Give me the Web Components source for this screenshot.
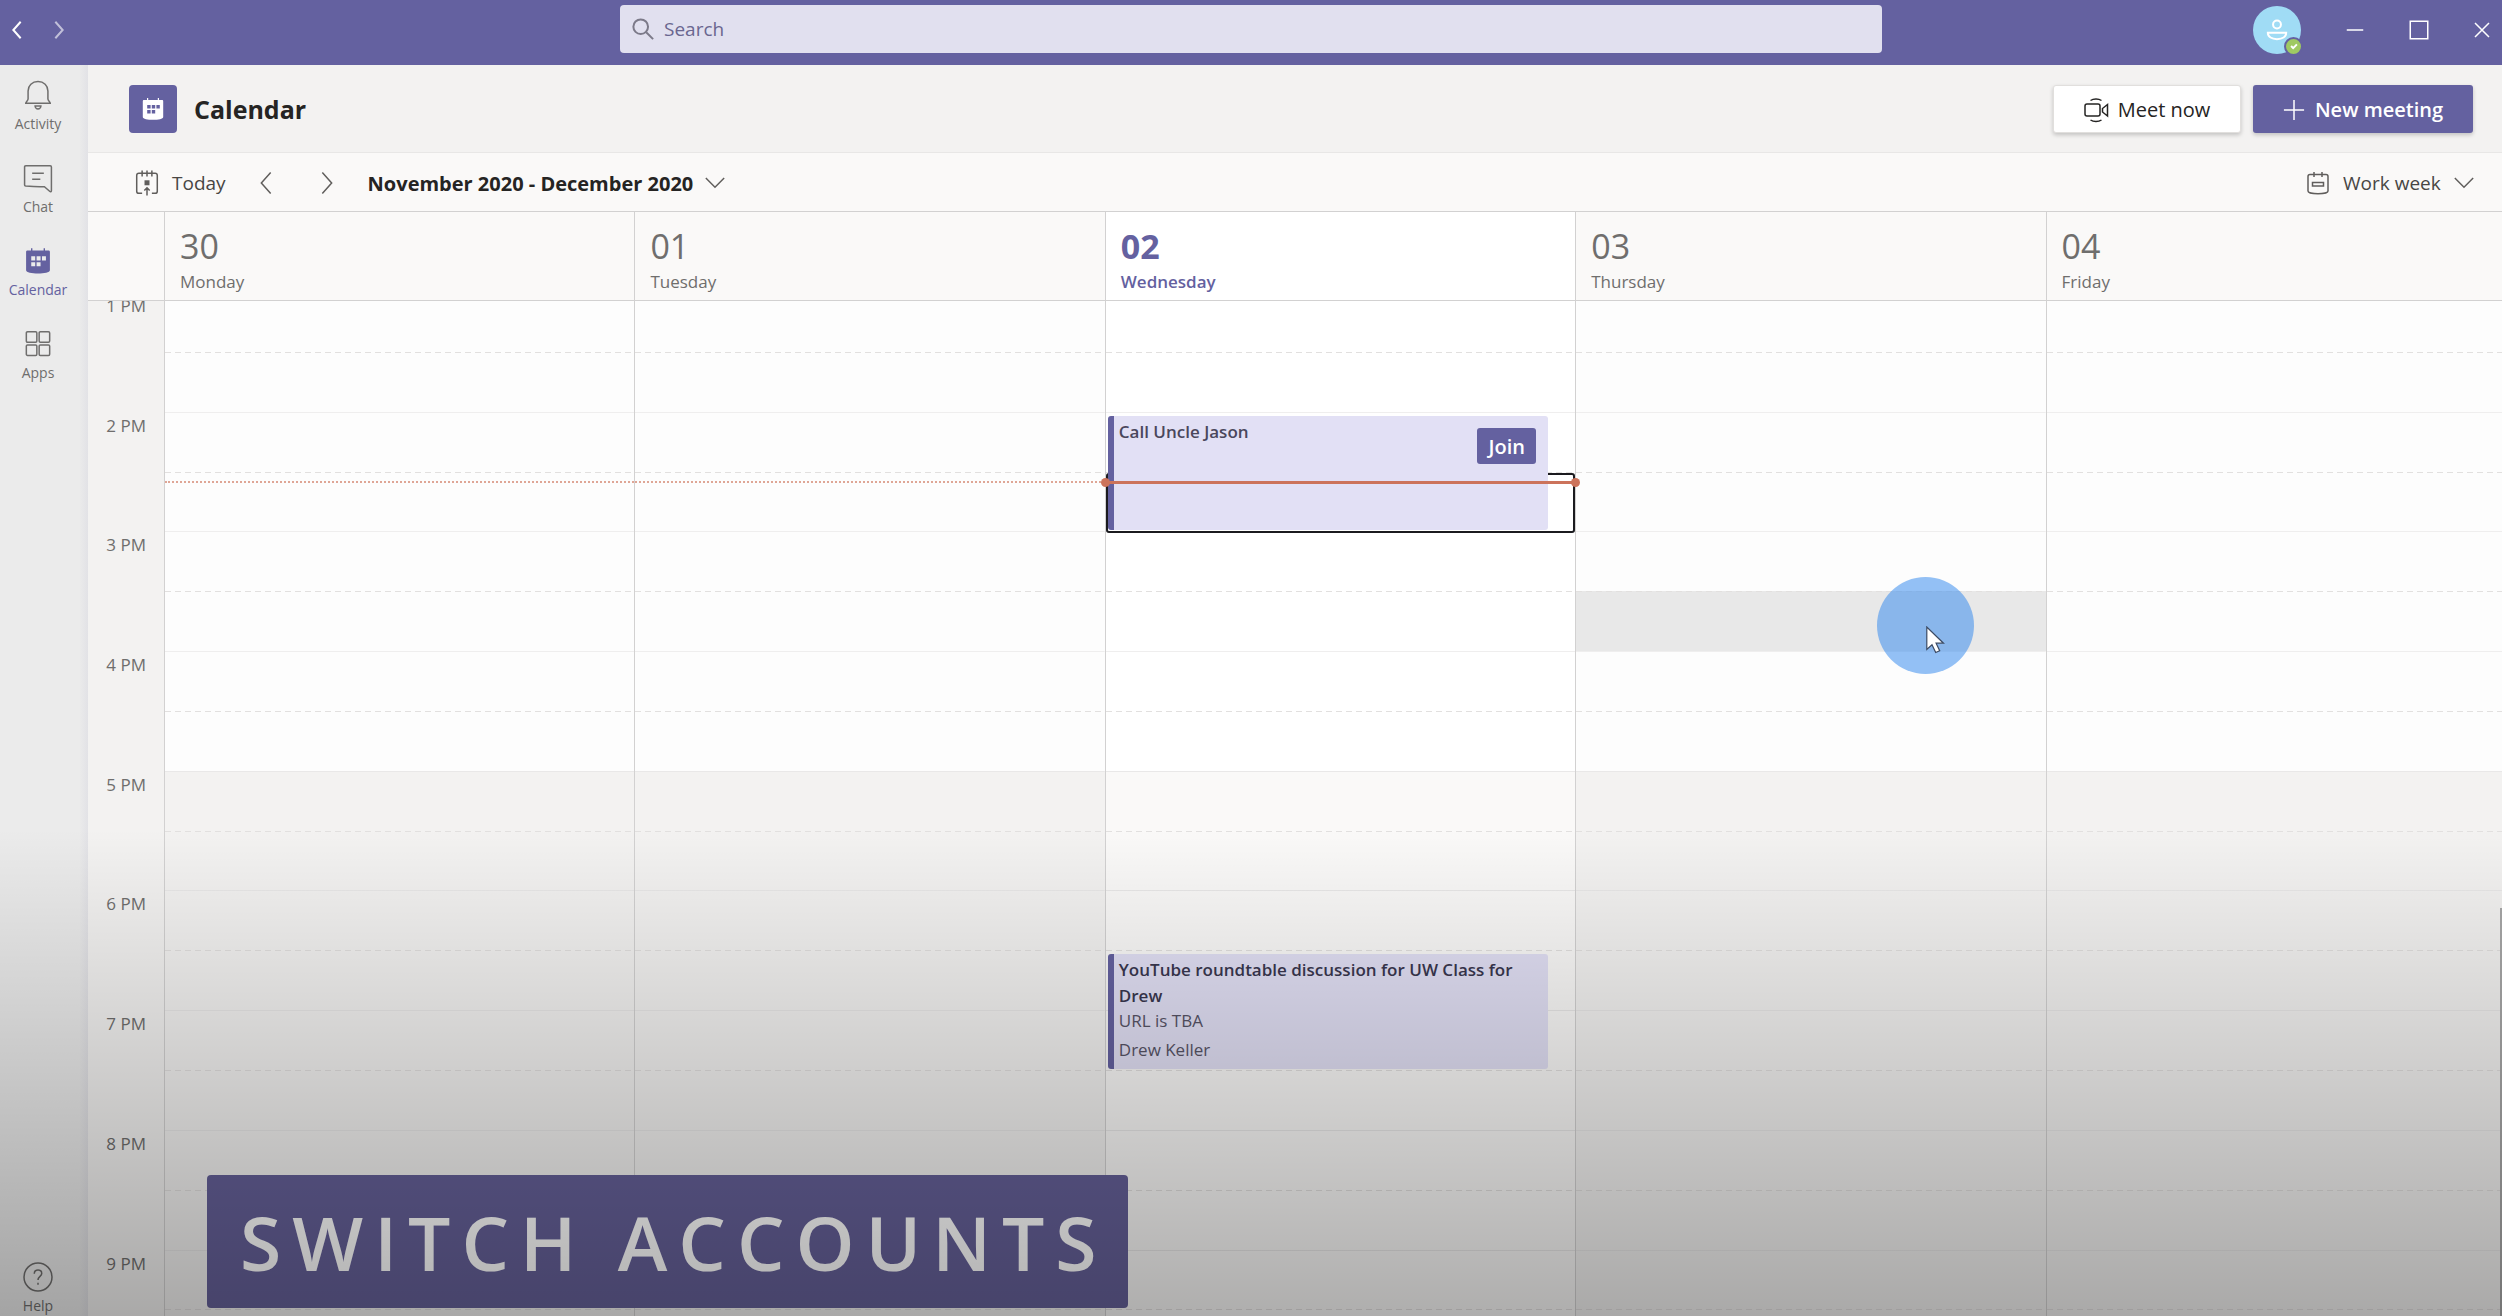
<!DOCTYPE html>
<html lang="en">
<head>
<meta charset="utf-8">
<title>Calendar</title>
<style>
body {
  margin: 0;
  font-family: "Open Sans", "Noto Sans", sans-serif;
  font-size: 19px;
  color: #484644;
  --brand: #6461a0;
  --line: #d2d1d1;
}
</style>
</head>
<body>
<teams-app></teams-app>

<script>
const icons = {
  back: `<path d="M16 3 8 12l8 9"/>`,
  forward: `<path d="m8 3 8 9-8 9"/>`,
  down: `<path d="m1 6 11 11L23 6"/>`,
  search: `<circle cx="9.500" cy="9.500" r="8"/><path d="m15.500 15.500 7.500 7.500"/>`,
  bell: `<path d="M1.500 19h21c0-1-2-2-2-3.500V8.500C20.500 4 17 .5 12 .5S3.500 4 3.500 8.500v7c0 1.500-2 2.500-2 3.500z"/><path d="M9.500 21.500h5c0 1.200-1.100 2.500-2.500 2.500s-2.500-1.300-2.500-2.500z"/>`,
  chat: `<path d="M1.500 1.500h21c.7 0 1 .3 1 1V23c0 .8-.8 1-1.300.6L17.500 19.500c-5 .3-10 0-16-.6-.6-.1-1-.4-1-1V2.500c0-.7.300-1 1-1z"/><path d="M7 8h10M7 13h7"/>`,
  calendar: `<path fill="currentColor" stroke="none" fill-rule="evenodd" d="M3 3h3V1h1.200v2h9.600V1H18v2h3c.8 0 1.200.5 1.200 1.200V20c0 2-5 2.800-10.200 2.800S1.800 22 1.800 20V4.200C1.800 3.500 2.200 3 3 3zm3.200 5v3.500h3.400V8zm4.600 0v3.500h3.400V8zm4.600 0v3.500h3.400V8zm-9.200 5v3.500h3.400V13zm4.600 0v3.500h3.400V13z"/>`,
  apps: `<rect x="2" y="1.500" width="9" height="9" rx="1"/><rect x="13" y="1.500" width="9" height="9" rx="1"/><rect x="2" y="12.800" width="9" height="9" rx="1"/><rect x="13" y="12.800" width="9" height="9" rx="1"/>`,
  help: `<circle cx="12" cy="12" r="12"/><path d="M8.800 9.200c0-2 1.300-3.200 3.200-3.200s3.200 1.200 3.200 2.900c0 2.500-3.200 2.600-3.200 5.600M12 17v1.600"/>`,
  today: `<path d="M7.500 21.500H4.500c-1.200 0-2-.8-2-2V5c0-1.200.8-2 2-2h15c1.200 0 2 .8 2 2v14.500c0 1.200-.8 2-2 2h-3M7.500.5V6M12 .5V6M16.500.5V6M12 23.500v-7M9.500 19l2.500-2.500 2.500 2.500"/><path fill="currentColor" stroke="none" d="M9.700 9.500h4.600v4.600H9.700z"/>`,
  week: `<path d="M4 3.500h16c1.200 0 2 .8 2 2V20c0 1.600-4.500 2.800-10 2.800S2 21.600 2 20V5.500c0-1.200.8-2 2-2zM8 1v5M16 1v5M6.500 11.500h11v3.500h-11z"/>`,
  video: `<rect x="1" y="6" width="15" height="12" rx="2"/><path d="M23.500 6.500v11.500L18.500 14v-3.500zM6.500 2.500c3-2 8-2 11 0M6.500 22c3 2 8 2 11 0"/>`,
  plus: `<path d="M12 1v22M1 12h22"/>`,
  minimize: `<path d="M1 12h22"/>`,
  maximize: `<path d="M1.500 1.500h21v21h-21z"/>`,
  close: `<path d="m1.500 1.500 21 21m0-21-21 21"/>`,
  person: `<circle cx="12" cy="6" r="4.300"/><path d="M2 15h20c0 4.500-4.500 7-10 7S2 19.500 2 15z"/>`,
  check: `<path d="m5 12 5 5 9-9"/>`,
};

// attach an open shadow root with the given markup
function render(el, html) {
  el.attachShadow({ mode: "open" }).innerHTML = html;
}

class AppIcon extends HTMLElement {
  connectedCallback() {
    const size = this.getAttribute("size") ?? "24";
    const stroke = (24 / size) * (this.getAttribute("weight") ?? 1.5);
    render(this, `
<style>
:host { display: inline-flex; flex: none; }
svg { display: block; }
</style>
<svg width="${size}" height="${size}" viewBox="0 0 24 24" fill="none" stroke="currentColor" stroke-width="${stroke}" overflow="visible" aria-hidden="true">${icons[this.getAttribute("name")]}</svg>
`);
  }
}

class TitleBar extends HTMLElement {
  constructor() {
    super();
    render(this, `
<style>
:host {
  display: grid;
  grid-template-columns: 1fr 1262px 1fr;
  height: 65px;
  background: var(--brand);
  color: #fff;
}
button {
  display: inline-flex;
  padding: 0;
  border: 0;
  background: none;
  color: inherit;
}
.nav {
  display: flex;
  align-items: center;
  gap: 20px;
  padding: 0 0 6px 6px;
}
.nav button:last-child { opacity: 0.6; }
.search {
  display: flex;
  align-items: center;
  gap: 10px;
  height: 48px;
  margin-top: 5px;
  padding: 0 12px;
  box-sizing: border-box;
  border-radius: 4px;
  background: #e1e0ef;
  color: #7c7a89;
}
input {
  flex: 1;
  min-width: 0;
  padding: 0;
  border: 0;
  outline: 0;
  background: none;
  font: inherit;
  color: #6461a0;
}
input::placeholder { color: #6a668f; opacity: 1; }
.right {
  display: flex;
  justify-content: flex-end;
  align-items: center;
  padding: 0 12px 6px 0;
  gap: 45px;
}
.avatar {
  position: relative;
  width: 48px;
  height: 48px;
  align-items: center;
  justify-content: center;
  border-radius: 50%;
  background: #a0dcf5;
}
.status {
  position: absolute;
  right: -2px;
  bottom: -2px;
  display: flex;
  align-items: center;
  justify-content: center;
  width: 15px;
  height: 15px;
  border: 2px solid var(--brand);
  border-radius: 50%;
  background: #9fc963;
}
</style>
<div class="nav">
  <button aria-label="Back"><app-icon name="back" size="22" weight="2"></app-icon></button>
  <button aria-label="Forward"><app-icon name="forward" size="22" weight="2"></app-icon></button>
</div>
<label class="search">
  <app-icon name="search" size="22" weight="2"></app-icon>
  <input type="search" placeholder="Search" aria-label="Search">
</label>
<div class="right">
  <button class="avatar" aria-label="Account">
    <app-icon name="person" size="22" weight="2"></app-icon>
    <span class="status"><app-icon name="check" size="10" weight="2"></app-icon></span>
  </button>
  <button aria-label="Minimize"><app-icon name="minimize" size="18"></app-icon></button>
  <button aria-label="Maximize"><app-icon name="maximize" size="20"></app-icon></button>
  <button aria-label="Close"><app-icon name="close" size="16"></app-icon></button>
</div>
`);
  }
}

class RailItem extends HTMLElement {
  connectedCallback() {
    render(this, `
<style>
:host { display: block; color: #6f6e6d; }
:host([active]) { color: var(--brand); }
button {
  display: flex;
  flex-direction: column;
  align-items: center;
  gap: 5px;
  width: 100%;
  height: 83px;
  padding: 16px 0 0;
  border: 0;
  background: none;
  font: inherit;
  font-size: 14px;
  line-height: 20px;
  color: inherit;
}
</style>
<button><app-icon name="${this.getAttribute("icon")}" size="28"></app-icon><slot></slot></button>
`);
  }
}

class AppRail extends HTMLElement {
  constructor() {
    super();
    render(this, `
<style>
:host {
  display: flex;
  flex-direction: column;
  width: 76px;
  padding-right: 12px;
  background: linear-gradient(90deg, #ebebeb 90%, #e2e2e6);
}
.bottom { margin-top: auto; height: 69px; }
</style>
<rail-item icon="bell">Activity</rail-item>
<rail-item icon="chat">Chat</rail-item>
<rail-item icon="calendar" active>Calendar</rail-item>
<rail-item icon="apps">Apps</rail-item>
<rail-item class="bottom" icon="help">Help</rail-item>
`);
  }
}

class PageHeader extends HTMLElement {
  constructor() {
    super();
    render(this, `
<style>
:host {
  display: flex;
  align-items: center;
  height: 87px;
  padding: 0 29px 0 41px;
  border-bottom: 1px solid #e8e7e6;
  background: #f3f2f1;
}
.tile {
  display: flex;
  align-items: center;
  justify-content: center;
  width: 48px;
  height: 48px;
  border-radius: 4px;
  background: var(--brand);
  color: #fff;
}
h1 {
  flex: 1;
  margin: 0 0 0 17px;
  font-size: 25px;
  font-weight: 700;
  color: #252423;
}
button {
  display: flex;
  align-items: center;
  justify-content: center;
  gap: 10px;
  height: 48px;
  padding: 2px 0 0;
  border: 0;
  border-radius: 3px;
  font: inherit;
  font-size: 20px;
  box-shadow: 0 2px 4px rgba(0, 0, 0, 0.2);
}
.meet {
  width: 188px;
  margin-right: 12px;
  border: 1px solid #e1dfdd;
  background: #fff;
  color: #252423;
}
.new {
  width: 220px;
  background: var(--brand);
  color: #fff;
  font-weight: 600;
}
</style>
<span class="tile"><app-icon name="calendar" size="24"></app-icon></span>
<h1>Calendar</h1>
<button class="meet"><app-icon name="video" size="24"></app-icon>Meet now</button>
<button class="new"><app-icon name="plus" size="22"></app-icon>New meeting</button>
`);
  }
}

class CalendarToolbar extends HTMLElement {
  constructor() {
    super();
    render(this, `
<style>
:host {
  display: flex;
  align-items: center;
  height: 56px;
  padding: 2px 28px 0 46px;
  border-bottom: 1px solid var(--line);
  background: #faf9f8;
}
button {
  display: inline-flex;
  align-items: center;
  gap: 12px;
  padding: 0;
  border: 0;
  background: none;
  font: inherit;
  color: inherit;
}
app-icon { color: #605e5c; }
.prev { margin-left: 26px; }
.next { margin-left: 33px; }
.range {
  margin-left: 27px;
  font-size: 20px;
  font-weight: 700;
  color: #252423;
}
.view {
  display: flex;
  align-items: center;
  gap: 13px;
  margin-left: auto;
}
select {
  appearance: none;
  padding: 0;
  border: 0;
  background: none;
  font: inherit;
  color: inherit;
}
</style>
<button><app-icon name="today" size="26"></app-icon>Today</button>
<button class="prev" aria-label="Previous"><app-icon name="back" size="28"></app-icon></button>
<button class="next" aria-label="Next"><app-icon name="forward" size="28"></app-icon></button>
<button class="range">November 2020 - December 2020<app-icon name="down" size="20"></app-icon></button>
<label class="view">
  <app-icon name="week" size="24"></app-icon>
  <select aria-label="View"><option>Work week</option></select>
  <app-icon name="down" size="20"></app-icon>
</label>
`);
  }
}

class DayHeading extends HTMLElement {
  connectedCallback() {
    render(this, `
<style>
:host {
  display: flex;
  flex-direction: column;
  padding: 12px 0 0 15px;
  border-left: 1px solid var(--line);
  background: #faf9f8;
  color: #6f6e6d;
}
:host([today]) {
  background: #fff;
  color: var(--brand);
  font-weight: 600;
}
.number {
  font-size: 34px;
  line-height: 44px;
}
:host([today]) .number { font-weight: 700; }
.name {
  font-size: 17px;
  line-height: 28px;
}
</style>
<span class="number">${this.getAttribute("number")}</span>
<span class="name"><slot></slot></span>
`);
  }
}

// A day is a stack of half hour slots, starting at 1 PM.
// Events go into the same grid through their grid-row.
class DayColumn extends HTMLElement {
  connectedCallback() {
    const hover = this.getAttribute("hover");
    const selected = this.getAttribute("selected");
    let slots = "";
    for (let i = 0; i < 20; i++) {
      const names = ["slot"];
      if (i % 2) names.push("half");
      if (i >= 8) names.push("off");
      if (hover === String(i)) names.push("hover");
      slots += `<div class="${names.join(" ")}" style="grid-row: ${i + 1}"></div>`;
    }
    if (selected) {
      slots += `<div class="selected" style="grid-row: ${Number(selected) + 1}"></div>`;
    }
    render(this, `
<style>
:host {
  position: relative;
  display: grid;
  grid-template: repeat(20, minmax(0, 1fr)) / 1fr;
  border-left: 1px solid var(--line);
  background: #fdfdfd;
  --off: #f3f2f1;
}
:host([today]) {
  background: #fff;
  --off: #faf9f8;
}
.slot {
  grid-column: 1;
  background: linear-gradient(#efeeee, #efeeee) top / 100% 1px no-repeat;
}
.off { background-color: var(--off); }
.off:not(.half) { background-image: linear-gradient(#e9e8e8, #e9e8e8); }
.half {
  background-image: repeating-linear-gradient(90deg, #e2e0df 0 6px, transparent 6px 10px);
}
.hover { background-color: #e8e8e8; }
.selected {
  grid-column: 1;
  margin: 1px 0 -2px;
  border: 2px solid #1b1b1f;
  border-radius: 3px;
}
</style>
${slots}<slot></slot>
`);
  }
}

class CalendarEvent extends HTMLElement {
  constructor() {
    super();
    render(this, `
<style>
:host {
  display: flex;
  justify-content: space-between;
  align-items: flex-start;
  grid-column: 1;
  margin: 4px 27px 1px 2px;
  padding: 3px 12px 0 5px;
  border-left: 6px solid var(--brand);
  border-radius: 3px;
  background: #e2e0f5;
  font-size: 17px;
  color: #575466;
  z-index: 1;
}
.text {
  display: flex;
  flex-direction: column;
  line-height: 26px;
}
.title { font-weight: 600; color: #4a475c; }
:host([strong]) .title { color: #39374f; }
::slotted([slot="place"]) { line-height: 23px; }
::slotted([slot="organizer"]) { line-height: 35px; }
</style>
<div class="text">
  <span class="title"><slot></slot></span>
  <slot name="place"></slot>
  <slot name="organizer"></slot>
</div>
<slot name="action"></slot>
`);
  }
}

class JoinButton extends HTMLElement {
  constructor() {
    super();
    render(this, `
<style>
:host { display: block; margin-top: 9px; }
button {
  width: 59px;
  height: 36px;
  padding: 2px 0 0;
  border: 0;
  border-radius: 3px;
  background: var(--brand);
  color: #fff;
  font: inherit;
  font-size: 20px;
  font-weight: 600;
}
</style>
<button>Join</button>
`);
  }
}

class NowLine extends HTMLElement {
  constructor() {
    super();
    render(this, `
<style>
:host {
  position: absolute;
  z-index: 2;
  top: 189px;
  left: 0;
  right: 0;
  height: 3px;
  background: #cc735b;
}
:host([past]) {
  height: 0;
  background: none;
  border-top: 2px dotted #dfa696;
}
:host(:not([past]))::before,
:host(:not([past]))::after {
  content: "";
  position: absolute;
  top: -3px;
  left: -5px;
  width: 9px;
  height: 9px;
  border-radius: 50%;
  background: #cc735b;
}
:host(:not([past]))::after {
  left: auto;
  right: -5px;
}
</style>
`);
  }
}

class WeekCalendar extends HTMLElement {
  constructor() {
    super();
    const hours = [1, 2, 3, 4, 5, 6, 7, 8, 9]
      .map((h) => `<span>${h} PM</span>`)
      .join("");
    render(this, `
<style>
:host {
  position: relative;
  isolation: isolate;
  display: flex;
  flex-direction: column;
  flex: 1;
  min-height: 0;
  overflow: hidden;
}
/* the last column runs under the scrollbar */
.head, .body {
  display: grid;
  grid-template-columns: 76px repeat(5, 1fr);
  margin-right: -14px;
}
.head {
  flex: none;
  height: 88px;
  border-bottom: 1px solid var(--line);
  background: #faf9f8;
}
.view {
  flex: 1;
  min-height: 0;
  overflow: hidden;
}
.body {
  height: 1197px;
  margin-top: -9px;
}
.hours {
  display: grid;
  grid-template-rows: repeat(10, 1fr);
  padding-right: 18px;
  background: #f3f2f1;
  text-align: right;
  font-size: 17px;
  line-height: 28px;
  color: #6f6e6d;
}
.thumb {
  position: absolute;
  right: 0;
  top: 63%;
  bottom: 0;
  width: 2px;
  background: #a8a8a8;
}
</style>
<div class="head">
  <span></span>
  <day-heading number="30">Monday</day-heading>
  <day-heading number="01">Tuesday</day-heading>
  <day-heading number="02" today>Wednesday</day-heading>
  <day-heading number="03">Thursday</day-heading>
  <day-heading number="04">Friday</day-heading>
</div>
<div class="view">
  <div class="body">
    <div class="hours">${hours}</div>
    <day-column><now-line past></now-line></day-column>
    <day-column><now-line past></now-line></day-column>
    <day-column today selected="3">
      <calendar-event style="grid-row: 3 / 5">Call Uncle Jason<join-button slot="action"></join-button></calendar-event>
      <calendar-event strong style="grid-row: 12 / 14">YouTube roundtable discussion for UW Class for Drew<span slot="place">URL is TBA</span><span slot="organizer">Drew Keller</span></calendar-event>
      <now-line></now-line>
    </day-column>
    <day-column hover="5"></day-column>
    <day-column></day-column>
  </div>
</div>
<div class="thumb"></div>
`);
  }
}

class ClickPointer extends HTMLElement {
  constructor() {
    super();
    render(this, `
<style>
:host {
  position: absolute;
  top: 577px;
  left: 1877px;
  width: 97px;
  height: 97px;
  border-radius: 50%;
  background: rgba(42, 131, 238, 0.5);
}
svg { position: absolute; top: 49px; left: 49px; }
</style>
<svg width="20" height="28" viewBox="0 0 20 28" aria-hidden="true">
  <path d="M.8 1v22.500l5.200-4.800 3.700 7.800 4-1.800-3.600-7.500h7.400z" fill="#fff" stroke="#3b4a63" stroke-width="1.200"/>
</svg>
`);
  }
}

class CaptionBanner extends HTMLElement {
  constructor() {
    super();
    render(this, `
<style>
:host {
  position: absolute;
  left: 207px;
  bottom: 8px;
  width: 921px;
  height: 133px;
  border-radius: 4px;
  background: #656098;
  color: #fff;
  font-size: 75px;
  font-weight: 600;
  line-height: 134px;
  letter-spacing: 11px;
  text-indent: 33px;
  white-space: nowrap;
}
</style>
<slot></slot>
`);
  }
}

class TeamsApp extends HTMLElement {
  constructor() {
    super();
    render(this, `
<style>
:host {
  position: relative;
  display: flex;
  flex-direction: column;
  height: 100vh;
  overflow: hidden;
}
.main {
  display: flex;
  flex: 1;
  min-height: 0;
}
.page {
  display: flex;
  flex-direction: column;
  flex: 1;
  min-width: 0;
}
.shade {
  position: absolute;
  inset: auto 0 0;
  height: 37%;
  background: linear-gradient(transparent, rgba(0, 0, 0, 0.3));
  pointer-events: none;
}
</style>
<title-bar></title-bar>
<div class="main">
  <app-rail></app-rail>
  <div class="page">
    <page-header></page-header>
    <calendar-toolbar></calendar-toolbar>
    <week-calendar></week-calendar>
  </div>
</div>
<click-pointer></click-pointer>
<caption-banner>SWITCH ACCOUNTS</caption-banner>
<div class="shade"></div>
`);
  }
}

customElements.define("app-icon", AppIcon);
customElements.define("title-bar", TitleBar);
customElements.define("rail-item", RailItem);
customElements.define("app-rail", AppRail);
customElements.define("page-header", PageHeader);
customElements.define("calendar-toolbar", CalendarToolbar);
customElements.define("day-heading", DayHeading);
customElements.define("day-column", DayColumn);
customElements.define("calendar-event", CalendarEvent);
customElements.define("join-button", JoinButton);
customElements.define("now-line", NowLine);
customElements.define("week-calendar", WeekCalendar);
customElements.define("click-pointer", ClickPointer);
customElements.define("caption-banner", CaptionBanner);
customElements.define("teams-app", TeamsApp);
</script>
</body>
</html>
